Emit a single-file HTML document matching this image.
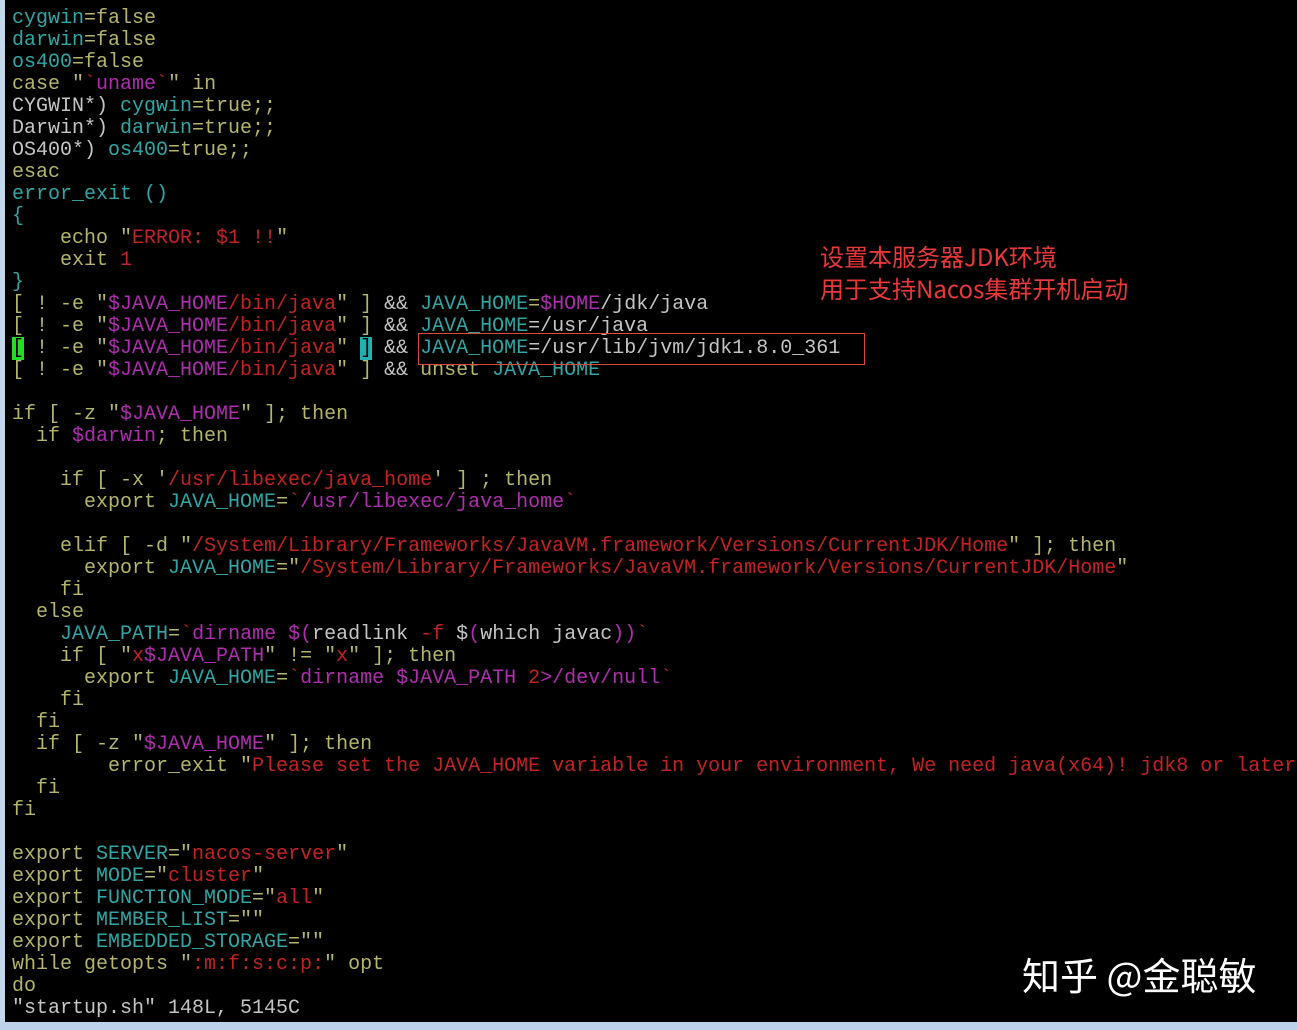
<!DOCTYPE html>
<html><head><meta charset="utf-8"><style>
html,body{margin:0;padding:0;background:#000;width:1297px;height:1030px;overflow:hidden;position:relative}
.lb{position:absolute;left:0;top:0;width:5px;height:1030px;background:#c4d8ec}
.bb{position:absolute;left:0;top:1022px;width:1297px;height:8px;background:#bcd2ea}
pre{position:absolute;left:12px;top:8px;margin:0;font-family:"Liberation Mono",monospace;font-size:20px;line-height:22px;color:#b4b46a;white-space:pre}
.c{color:#2fa6a6}.m{color:#b02cb0}.r{color:#c42222}.w{color:#c4c4c4}.y{color:#b4b46a}
.cur{background:#22dd22;color:#000}.cb{background:#22b0b0;color:#000}
.box{position:absolute;left:418px;top:333px;width:445px;height:30px;border:1px solid #d84a3a}
.ann{position:absolute;left:820px;font-family:"Noto Sans CJK SC",sans-serif;font-size:24px;color:#e8383a;line-height:32px}
.wm{position:absolute;left:1022px;top:949px;font-family:"Noto Sans CJK SC",sans-serif;font-size:38px;color:#fff;line-height:50px}
</style></head><body>
<div class="lb"></div>
<pre><span class="c">cygwin</span>=false
<span class="c">darwin</span>=false
<span class="c">os400</span>=false
case "<span class="r">`</span><span class="m">uname</span><span class="r">`</span>" in
<span class="w">CYGWIN*)</span> <span class="c">cygwin</span>=true;;
<span class="w">Darwin*)</span> <span class="c">darwin</span>=true;;
<span class="w">OS400*)</span> <span class="c">os400</span>=true;;
esac
<span class="c">error_exit ()</span>
<span class="c">{</span>
    echo "<span class="r">ERROR: $1 !!</span>"
    exit <span class="r">1</span>
<span class="c">}</span>
[ ! -e "<span class="m">$JAVA_HOME</span><span class="r">/bin/java</span>" ] <span class="w">&amp;&amp;</span> <span class="c">JAVA_HOME</span>=<span class="m">$HOME</span><span class="w">/jdk/java</span>
[ ! -e "<span class="m">$JAVA_HOME</span><span class="r">/bin/java</span>" ] <span class="w">&amp;&amp;</span> <span class="c">JAVA_HOME</span><span class="w">=/usr/java</span>
<span class="cur">[</span> ! -e "<span class="m">$JAVA_HOME</span><span class="r">/bin/java</span>" <span class="cb">]</span> <span class="w">&amp;&amp;</span> <span class="c">JAVA_HOME</span><span class="w">=/usr/lib/jvm/jdk1.8.0_361</span>
[ ! -e "<span class="m">$JAVA_HOME</span><span class="r">/bin/java</span>" ] <span class="w">&amp;&amp;</span> unset <span class="c">JAVA_HOME</span>

if [ -z "<span class="m">$JAVA_HOME</span>" ]; then
  if <span class="m">$darwin</span>; then

    if [ -x '<span class="r">/usr/libexec/java_home</span>' ] ; then
      export <span class="c">JAVA_HOME</span>=<span class="r">`</span><span class="m">/usr/libexec/java_home</span><span class="r">`</span>

    elif [ -d "<span class="r">/System/Library/Frameworks/JavaVM.framework/Versions/CurrentJDK/Home</span>" ]; then
      export <span class="c">JAVA_HOME</span>="<span class="r">/System/Library/Frameworks/JavaVM.framework/Versions/CurrentJDK/Home</span>"
    fi
  else
    <span class="c">JAVA_PATH</span>=<span class="r">`</span><span class="m">dirname $(</span><span class="w">readlink</span> <span class="r">-f</span> <span class="w">$</span><span class="m">(</span><span class="w">which javac</span><span class="m">))</span><span class="r">`</span>
    if [ "<span class="r">x</span><span class="m">$JAVA_PATH</span>" != "<span class="r">x</span>" ]; then
      export <span class="c">JAVA_HOME</span>=<span class="r">`</span><span class="m">dirname $JAVA_PATH</span> <span class="r">2</span><span class="m">&gt;/dev/null</span><span class="r">`</span>
    fi
  fi
  if [ -z "<span class="m">$JAVA_HOME</span>" ]; then
        error_exit "<span class="r">Please set the JAVA_HOME variable in your environment, We need java(x64)! jdk8 or later</span>
  fi
fi

export <span class="c">SERVER</span>="<span class="r">nacos-server</span>"
export <span class="c">MODE</span>="<span class="r">cluster</span>"
export <span class="c">FUNCTION_MODE</span>="<span class="r">all</span>"
export <span class="c">MEMBER_LIST</span>=""
export <span class="c">EMBEDDED_STORAGE</span>=""
while getopts "<span class="r">:m:f:s:c:p:</span>" opt
do
<span class="w">"startup.sh" 148L, 5145C</span></pre>
<div class="box"></div>
<div class="ann" style="top:240px">设置本服务器JDK环境</div>
<div class="ann" style="top:272px">用于支持Nacos集群开机启动</div>
<div class="wm">知乎 @金聪敏</div>
<div class="bb"></div>
</body></html>
